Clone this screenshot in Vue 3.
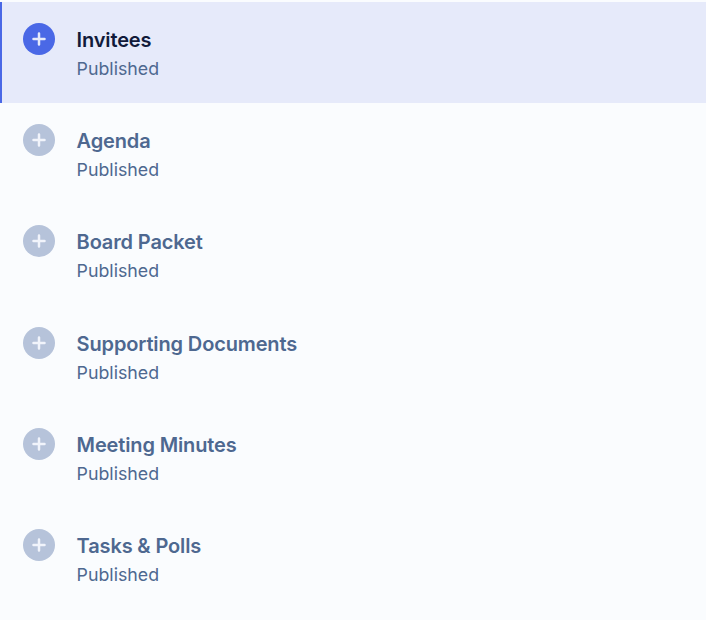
<script setup>
const items = ['Invitees', 'Agenda', 'Board Packet', 'Supporting Documents', 'Meeting Minutes', 'Tasks & Polls']
</script>

<template>
  <div class="page">
    <div v-for="(item, i) in items" :key="item" class="row" :class="{ active: i === 0 }">
      <span class="badge">
        <svg width="14" height="14" viewBox="0 0 14 14" aria-hidden="true">
          <path d="M7 1.5v11M1.5 7h11" fill="none" stroke="currentColor" stroke-width="2.5" stroke-linecap="round" />
        </svg>
      </span>
      <div class="text">
        <div class="title">{{ item }}</div>
        <div class="sub">Published</div>
      </div>
    </div>
  </div>
</template>

<style>
html, body { margin: 0; background: #fafcfe; }
</style>

<style scoped>
.page {
  width: 706px;
  height: 620px;
  padding-top: 2px;
  box-sizing: border-box;
  background: #fafcfe;
  font-family: Inter, "Liberation Sans", sans-serif;
  overflow: hidden;
}
.row {
  height: 101.2px;
  box-sizing: border-box;
  display: flex;
  align-items: flex-start;
  gap: 21.6px;
  padding: 22px 0 0 23px;
}
.row.active {
  background: #e6eafa;
  box-shadow: inset 2px 0 0 #4a68e6;
}
.badge {
  width: 32px;
  height: 32px;
  flex: none;
  margin-top: -1px;
  border-radius: 50%;
  background: #b6c3da;
  color: #f1f4fb;
  display: flex;
  align-items: center;
  justify-content: center;
}
.active .badge {
  background: #4a68e6;
  color: #e6eafa;
}
.text { display: flex; flex-direction: column; }
.title {
  font-size: 20px;
  line-height: 32px;
  font-weight: 600;
  letter-spacing: -0.14px;
  color: #4e6890;
}
.active .title { color: #111a3a; }
.sub {
  font-size: 17.8px;
  line-height: 26px;
  color: #4e6890;
}
</style>
